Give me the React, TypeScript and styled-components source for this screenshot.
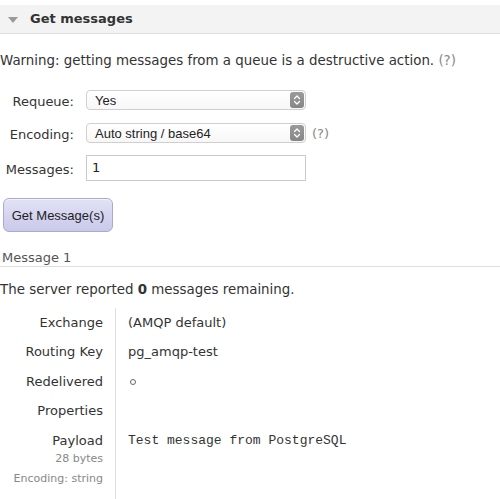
import styled, { createGlobalStyle } from 'styled-components'

const GlobalStyle = createGlobalStyle`
  body {
    margin: 0;
    background: #fff;
    font-family: "DejaVu Sans", Verdana, sans-serif;
    font-size: 13px;
    color: #333;
  }
`

const Page = styled.div`
  width: 500px;
  height: 499px;
  overflow: hidden;
  padding-top: 5px;
  box-sizing: border-box;
`

const SectionHeader = styled.div`
  display: flex;
  align-items: center;
  height: 28px;
  padding-left: 8px;
  background: #f3f3f3;
  border-bottom: 1px solid #dedede;
  font-weight: bold;
  color: #333;
  line-height: 28px;
`

const Arrow = styled.span`
  width: 0;
  height: 0;
  margin-right: 12px;
  margin-top: 2px;
  border-left: 5px solid transparent;
  border-right: 5px solid transparent;
  border-top: 6px solid #9a9a9a;
`

const Warning = styled.p`
  margin: 19px 0 0;
  font-size: 13.4px;
  line-height: 16px;
`

const Hint = styled.span`
  color: #888;
`

const Form = styled.div`
  display: grid;
  grid-template-columns: 74px 220px auto;
  column-gap: 12px;
  align-items: center;
  justify-content: start;
  margin-top: 21px;
`

const Label = styled.label<{ $gap: number }>`
  text-align: right;
  white-space: nowrap;
  line-height: 16px;
  margin-top: ${p => p.$gap}px;
  padding-top: 3px;
`

const Cell = styled.div<{ $gap: number }>`
  margin-top: ${p => p.$gap}px;
  display: flex;
  align-items: center;
`

const SelectBox = styled.div`
  display: flex;
  align-items: center;
  width: 220px;
  height: 20px;
  box-sizing: border-box;
  border: 1px solid #cfcfcf;
  border-radius: 4px;
  background: linear-gradient(#ffffff, #f7f7f7);
  font-family: "Liberation Sans", Arial, sans-serif;
  font-size: 13px;
  color: #222;
  padding: 0 1px 0 8px;
`

const SelectText = styled.span`
  flex: 1;
`

const SelectArrows = styled.span`
  width: 14px;
  height: 16px;
  border-radius: 3px;
  background: linear-gradient(#9a9a9a, #868686);
  display: flex;
  align-items: center;
  justify-content: center;
`

const TextInput = styled.div`
  width: 220px;
  height: 26px;
  box-sizing: border-box;
  border: 1px solid #cacaca;
  padding: 0 5px;
  line-height: 24px;
  color: #222;
`

const Button = styled.button`
  margin: 17px 0 0 3px;
  width: 110px;
  height: 34px;
  border: 1px solid #a9a9d6;
  border-radius: 6px;
  background: linear-gradient(#e2e2f6, #c9c9ea);
  font-family: "Liberation Sans", Arial, sans-serif;
  font-size: 13px;
  color: #222;
  padding: 0;
  box-shadow: inset 0 1px 0 rgba(255, 255, 255, 0.6);
`

const MessageHeading = styled.h3`
  margin: 18px 0 0;
  padding-left: 2px;
  font-size: 13px;
  font-weight: normal;
  line-height: 16px;
  color: #555;
  border-bottom: 1px solid #dedede;
`

const Summary = styled.p`
  margin: 15px 0 0;
  font-size: 13.4px;
  line-height: 16px;
`

const Details = styled.div`
  display: grid;
  grid-template-columns: 103px 1fr;
  margin-top: 10px;
`

const Key = styled.div<{ $last?: boolean }>`
  text-align: right;
  line-height: 16px;
  padding: 6.75px 0 ${p => (p.$last ? 20 : 6.75)}px;
  color: #333;
`

const Value = styled.div<{ $last?: boolean; $mono?: boolean }>`
  margin-left: 12px;
  border-left: 1px solid #dedede;
  padding: 6.75px 0 ${p => (p.$last ? 20 : 6.75)}px 12px;
  line-height: 16px;
  font-family: ${p => (p.$mono ? '"Liberation Mono", "Courier New", monospace' : 'inherit')};
  color: #333;
`

const SubNote = styled.div`
  font-size: 11px;
  line-height: 20px;
  color: #888;
`

const EmptyMark = styled.span`
  display: inline-block;
  width: 4px;
  height: 4px;
  border: 1px solid #666;
  border-radius: 50%;
  margin-left: 2px;
  vertical-align: 1px;
`

function Chevrons() {
  return (
    <svg width="8" height="12" viewBox="0 0 8 12">
      <path d="M1.5 4.5 L4 2 L6.5 4.5 M1.5 7.5 L4 10 L6.5 7.5" fill="none" stroke="#fff" strokeWidth="1.3" strokeLinecap="round" strokeLinejoin="round" />
    </svg>
  )
}

function Select({ value }: { value: string }) {
  return (
    <SelectBox>
      <SelectText>{value}</SelectText>
      <SelectArrows>
        <Chevrons />
      </SelectArrows>
    </SelectBox>
  )
}

export default function App() {
  return (
    <Page>
      <GlobalStyle />
      <SectionHeader>
        <Arrow />
        Get messages
      </SectionHeader>
      <Warning>
        Warning: getting messages from a queue is a destructive action. <Hint>(?)</Hint>
      </Warning>
      <Form>
        <Label $gap={0}>Requeue:</Label>
        <Cell $gap={0}>
          <Select value="Yes" />
        </Cell>
        <span />
        <Label $gap={13}>Encoding:</Label>
        <Cell $gap={13}>
          <Select value="Auto string / base64" />
        </Cell>
        <Cell $gap={13}>
          <Hint style={{ marginLeft: -6 }}>(?)</Hint>
        </Cell>
        <Label $gap={12}>Messages:</Label>
        <Cell $gap={12}>
          <TextInput>1</TextInput>
        </Cell>
        <span />
      </Form>
      <Button>Get Message(s)</Button>
      <MessageHeading>Message 1</MessageHeading>
      <Summary>
        The server reported <b>0</b> messages remaining.
      </Summary>
      <Details>
        <Key>Exchange</Key>
        <Value>(AMQP default)</Value>
        <Key>Routing Key</Key>
        <Value>pg_amqp-test</Value>
        <Key>Redelivered</Key>
        <Value>
          <EmptyMark />
        </Value>
        <Key>Properties</Key>
        <Value>&nbsp;</Value>
        <Key $last>
          Payload
          <SubNote>28 bytes</SubNote>
          <SubNote>Encoding: string</SubNote>
        </Key>
        <Value $last $mono>Test message from PostgreSQL</Value>
      </Details>
    </Page>
  )
}
